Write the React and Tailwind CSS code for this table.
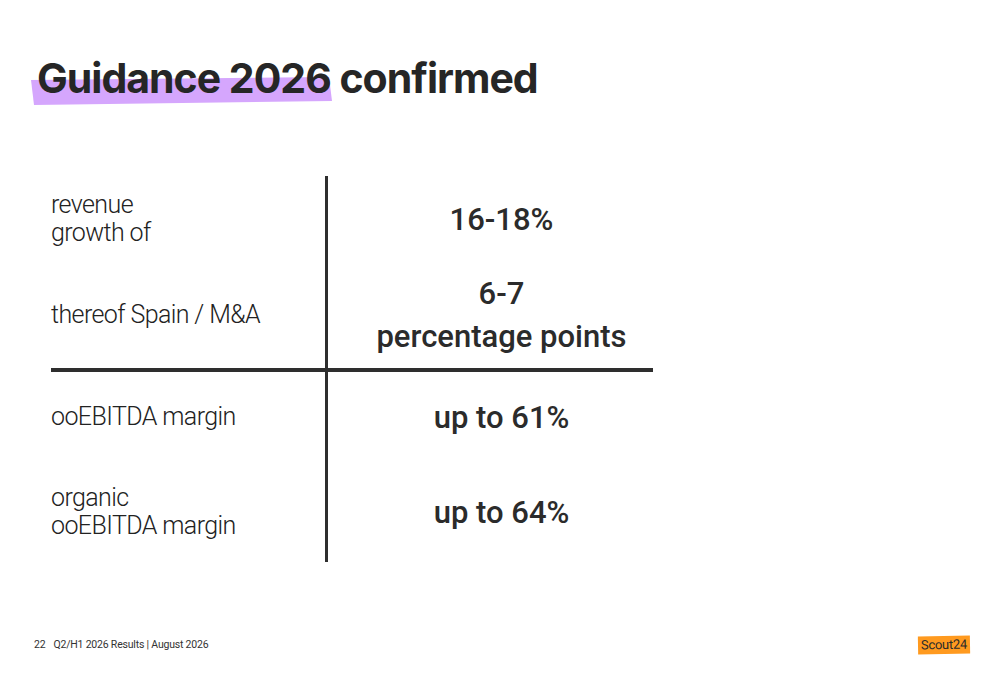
import React from "react";

const rows = [
  { label: ["revenue", "growth of"], value: ["16-18%"], h: "h-[86px]" },
  { label: ["thereof Spain / M&A"], value: ["6-7", "percentage points"], h: "h-[106px]" },
];
const rows2 = [
  { label: ["ooEBITDA margin"], value: ["up to 61%"], h: "h-[90px]" },
  { label: ["organic", "ooEBITDA margin"], value: ["up to 64%"], h: "h-[100px]" },
];

const roboto = { fontFamily: "Roboto, 'Noto Sans', sans-serif" };

function Row({ r }) {
  return (
    <div className={`flex ${r.h}`}>
      <div
        className="w-[277px] border-r-[3px] border-[#2e2e2e] flex flex-col justify-center text-[25px] leading-[28px] font-light text-[#222] tracking-[-0.6px]"
        style={roboto}
      >
        {r.label.map((l) => (
          <div key={l}>{l}</div>
        ))}
      </div>
      <div
        className="flex-1 pl-[22px] flex flex-col justify-center items-center text-[31px] leading-[43px] font-medium text-[#2b2b2b]"
        style={roboto}
      >
        {r.value.map((v) => (
          <div key={v}>{v}</div>
        ))}
      </div>
    </div>
  );
}

export default function App() {
  return (
    <div className="w-[1000px] h-[685px] bg-white relative flex flex-col" style={{ fontFamily: "Inter, 'Noto Sans', sans-serif" }}>
      <div className="pl-[37px] pt-[49px]">
        <div className="relative inline-block">
          <svg className="absolute left-[-6px] top-[28px]" width="304" height="30" viewBox="0 0 304 30">
            <polygon points="0,3 298,0 301,24 3,28" fill="#d5a6fd" />
          </svg>
          <h1 className="relative text-[41px] leading-[58px] font-bold text-[#262626] tracking-[-1px]">
            Guidance 2026 confirmed
          </h1>
        </div>
      </div>

      <div className="ml-[51px] mt-[69px] w-[602px] flex flex-col">
        {rows.map((r) => (
          <Row key={r.value[0]} r={r} />
        ))}
        <div className="h-[4px] bg-[#2e2e2e]" />
        {rows2.map((r) => (
          <Row key={r.value[0]} r={r} />
        ))}
      </div>

      <div className="mt-auto mb-[31px] px-[34px] flex items-center justify-between" style={roboto}>
        <div className="text-[10.5px] text-[#333] tracking-[-0.2px]">
          <span className="mr-[8px]">22</span>Q2/H1 2026 Results | August 2026
        </div>
        <div className="mr-[-4px] bg-[#ff9a1f] px-[3px] h-[18px] flex items-center text-[13px] text-[#2b2b2b] tracking-[-0.3px] rotate-[-1deg]">
          Scout24
        </div>
      </div>
    </div>
  );
}
